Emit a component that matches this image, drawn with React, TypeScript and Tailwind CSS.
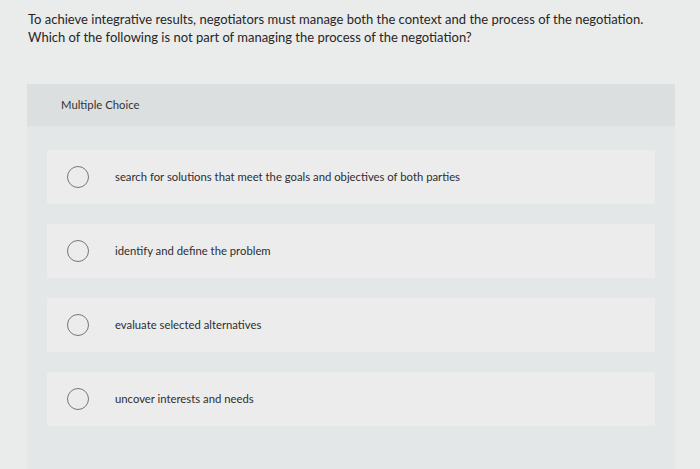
const options = [
  'search for solutions that meet the goals and objectives of both parties',
  'identify and define the problem',
  'evaluate selected alternatives',
  'uncover interests and needs',
]

export default function App() {
  return (
    <div className="w-[700px] h-[469px] overflow-hidden bg-[#eaebeb] font-['Lato',sans-serif]">
      {/* Question */}
      <div className="pl-[28px] pr-[40px] pt-[10px] text-[13px] leading-[18px] text-[#262626]">
        <p>To achieve integrative results, negotiators must manage both the context and the process of the negotiation.</p>
        <p>Which of the following is not part of managing the process of the negotiation?</p>
      </div>

      {/* Answer panel */}
      <div className="ml-[27px] mr-[25px] mt-[38px] h-[400px] bg-[#e4e7e7]">
        <div className="h-[42px] flex items-center pl-[34px] bg-[#dbdfe0] text-[11.3px] text-[#333333]">
          Multiple Choice
        </div>
        <div className="px-5 pt-6 flex flex-col gap-5">
          {options.map((opt) => (
            <div key={opt} className="h-[54px] flex items-center pl-5 bg-[#ececec]">
              <span className="w-[22px] h-[22px] shrink-0 rounded-full border-[1.5px] border-[#777777]" />
              <span className="ml-[26px] text-[11.3px] text-[#2e2e2e]">{opt}</span>
            </div>
          ))}
        </div>
      </div>
    </div>
  )
}
